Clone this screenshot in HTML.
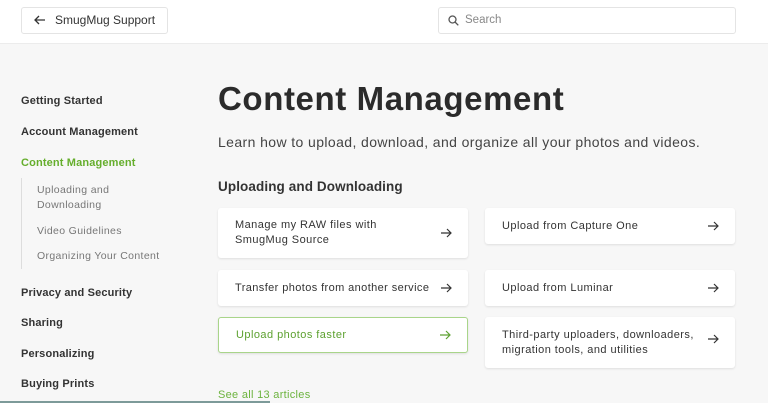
<!DOCTYPE html><html><head><style>
*{margin:0;padding:0;box-sizing:border-box}
body{width:768px;height:403px;overflow:hidden;background:#f7f7f7;font-family:"Liberation Sans",sans-serif;color:#2b2b2b;position:relative}
.hdr{position:absolute;left:0;top:0;width:768px;height:44px;background:#fff;border-bottom:1px solid #ececec}
.back{position:absolute;left:21px;top:7px;width:147px;height:27px;border:1px solid #e4e4e4;border-radius:3px;font-size:12px;line-height:25px;padding-left:33px;color:#333}
.back svg{position:absolute;left:12px;top:7px}
.search{position:absolute;left:438px;top:7px;width:298px;height:27px;border:1px solid #e4e4e4;border-radius:3px;font-size:11.5px;line-height:25px;padding-left:26px;color:#888}
.search svg{position:absolute;left:9px;top:7px}
.nav{position:absolute;left:21px;font-size:11px;font-weight:bold;color:#333;letter-spacing:0.15px}
.sub{position:absolute;left:37px;font-size:10.5px;color:#777;line-height:15px;letter-spacing:0.35px}
.vline{position:absolute;left:21px;top:178px;width:1px;height:91px;background:#ddd}
h1{position:absolute;left:218px;top:80px;font-size:33px;font-weight:bold;color:#2b2b2b;letter-spacing:0.6px}
.lead{position:absolute;left:218px;top:134px;font-size:14px;color:#444;letter-spacing:0.4px}
h2{position:absolute;left:218px;top:179px;font-size:13.5px;font-weight:bold;color:#333;letter-spacing:0.1px}
.card{position:absolute;background:#fff;border-radius:3px;box-shadow:0 1px 2px rgba(0,0,0,.1);font-size:11px;color:#333;line-height:15px;padding:0 30px 0 17px;display:flex;align-items:center;letter-spacing:0.45px;white-space:nowrap}
.card svg{position:absolute;right:16px;top:50%;margin-top:-5px}
.g{border:1px solid #a9d58a;color:#5da130}
.see{position:absolute;left:218px;top:389px;font-size:11px;color:#6cb33e;letter-spacing:0.3px}
.bl{position:absolute;left:0;top:401px;width:270px;height:2px;background:#7d9a99}
</style></head><body>
<div class="hdr">
<div class="back"><svg width="12" height="10" viewBox="0 0 12 10"><path d="M11 5H1.5M5 1L1 5l4 4" stroke="#333" stroke-width="1.3" fill="none"/></svg>SmugMug Support</div>
<div class="search"><svg width="11" height="11" viewBox="0 0 11 11"><circle cx="4.5" cy="4.5" r="3.5" stroke="#555" stroke-width="1.3" fill="none"/><path d="M7 7l3.3 3.3" stroke="#555" stroke-width="1.3"/></svg>Search</div>
</div>
<div class="nav" style="top:95px">Getting Started</div>
<div class="nav" style="top:126px">Account Management</div>
<div class="nav" style="top:157px;color:#65ae2c">Content Management</div>
<div class="vline"></div>
<div class="sub" style="top:183px">Uploading and<br>Downloading</div>
<div class="sub" style="top:224px">Video Guidelines</div>
<div class="sub" style="top:249px">Organizing Your Content</div>
<div class="nav" style="top:287px">Privacy and Security</div>
<div class="nav" style="top:317px">Sharing</div>
<div class="nav" style="top:348px">Personalizing</div>
<div class="nav" style="top:378px">Buying Prints</div>
<h1>Content Management</h1>
<div class="lead">Learn how to upload, download, and organize all your photos and videos.</div>
<h2>Uploading and Downloading</h2>
<div class="card" style="left:218px;top:208px;width:250px;height:50px">Manage my RAW files with<br>SmugMug Source<svg width="11" height="10" viewBox="0 0 11 10"><path d="M0 5h9.5M6 1l4 4-4 4" stroke="#333" stroke-width="1.2" fill="none"/></svg></div>
<div class="card" style="left:485px;top:208px;width:250px;height:36px">Upload from Capture One<svg width="11" height="10" viewBox="0 0 11 10"><path d="M0 5h9.5M6 1l4 4-4 4" stroke="#333" stroke-width="1.2" fill="none"/></svg></div>
<div class="card" style="left:218px;top:270px;width:250px;height:36px;letter-spacing:0.4px">Transfer photos from another service<svg width="11" height="10" viewBox="0 0 11 10"><path d="M0 5h9.5M6 1l4 4-4 4" stroke="#333" stroke-width="1.2" fill="none"/></svg></div>
<div class="card" style="left:485px;top:270px;width:250px;height:36px">Upload from Luminar<svg width="11" height="10" viewBox="0 0 11 10"><path d="M0 5h9.5M6 1l4 4-4 4" stroke="#333" stroke-width="1.2" fill="none"/></svg></div>
<div class="card g" style="left:218px;top:317px;width:250px;height:36px">Upload photos faster<svg width="11" height="10" viewBox="0 0 11 10"><path d="M0 5h9.5M6 1l4 4-4 4" stroke="#5da130" stroke-width="1.2" fill="none"/></svg></div>
<div class="card" style="left:485px;top:317px;width:250px;height:51px">Third-party uploaders, downloaders,<br>migration tools, and utilities<svg width="11" height="10" viewBox="0 0 11 10" style="top:17px;margin-top:0"><path d="M0 5h9.5M6 1l4 4-4 4" stroke="#333" stroke-width="1.2" fill="none"/></svg></div>
<div class="see">See all 13 articles</div>
<div class="bl"></div>
</body></html>
